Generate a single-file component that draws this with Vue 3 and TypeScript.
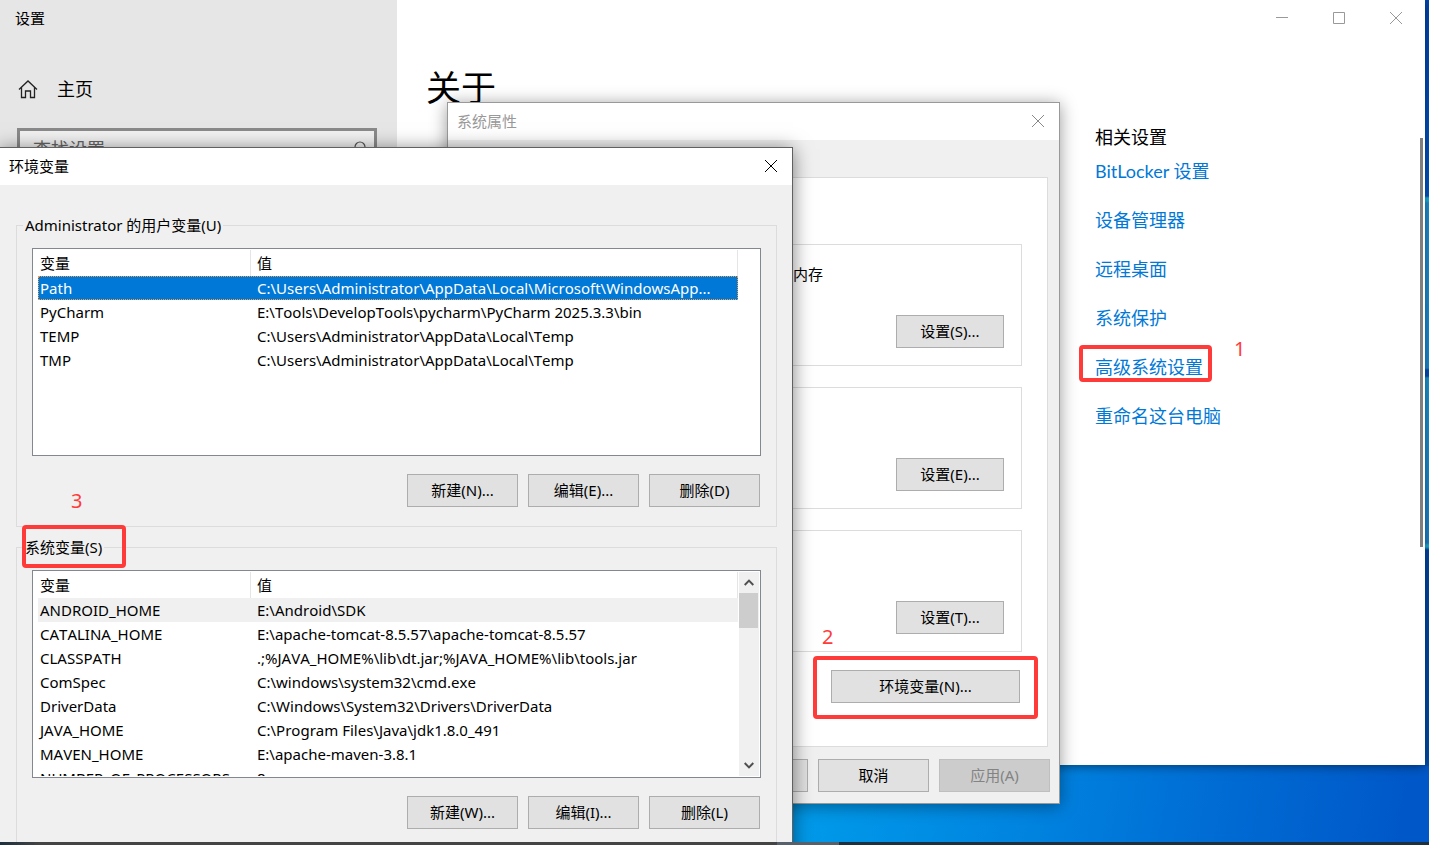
<script setup lang="ts">
interface Variable {
  name: string
  value: string
}

interface VariableGroup {
  id: string
  legend: string
  rows: Variable[]
  scroll: boolean
  current: string
  actions: string[]
}

const links: string[] = ['BitLocker 设置', '设备管理器', '远程桌面', '系统保护', '高级系统设置', '重命名这台电脑']

const sections = [
  { text: '虚拟内存', action: '设置(S)...' },
  { text: '', action: '设置(E)...' },
  { text: '', action: '设置(T)...' },
]

const groups: VariableGroup[] = [
  {
    id: 'user',
    legend: 'Administrator 的用户变量(U)',
    scroll: false,
    current: 'selected',
    rows: [
      { name: 'Path', value: 'C:\\Users\\Administrator\\AppData\\Local\\Microsoft\\WindowsApp...' },
      { name: 'PyCharm', value: 'E:\\Tools\\DevelopTools\\pycharm\\PyCharm 2025.3.3\\bin' },
      { name: 'TEMP', value: 'C:\\Users\\Administrator\\AppData\\Local\\Temp' },
      { name: 'TMP', value: 'C:\\Users\\Administrator\\AppData\\Local\\Temp' },
    ],
    actions: ['新建(N)...', '编辑(E)...', '删除(D)'],
  },
  {
    id: 'system',
    legend: '系统变量(S)',
    scroll: true,
    current: 'inactive',
    rows: [
      { name: 'ANDROID_HOME', value: 'E:\\Android\\SDK' },
      { name: 'CATALINA_HOME', value: 'E:\\apache-tomcat-8.5.57\\apache-tomcat-8.5.57' },
      { name: 'CLASSPATH', value: '.;%JAVA_HOME%\\lib\\dt.jar;%JAVA_HOME%\\lib\\tools.jar' },
      { name: 'ComSpec', value: 'C:\\windows\\system32\\cmd.exe' },
      { name: 'DriverData', value: 'C:\\Windows\\System32\\Drivers\\DriverData' },
      { name: 'JAVA_HOME', value: 'C:\\Program Files\\Java\\jdk1.8.0_491' },
      { name: 'MAVEN_HOME', value: 'E:\\apache-maven-3.8.1' },
      { name: 'NUMBER_OF_PROCESSORS', value: '8' },
    ],
    actions: ['新建(W)...', '编辑(I)...', '删除(L)'],
  },
]
</script>

<template>
  <div class="desktop">
    <main class="settings">
      <aside class="sidebar">
        <div class="app-title">设置</div>
        <a class="home" href="#">
          <svg width="20" height="20" viewBox="0 0 20 20" fill="none" stroke="#222" stroke-width="1.3">
            <path d="M1 10.500 10 2 19 10.500M3.500 8.500v10h4V12h5v6.500h4v-10" />
          </svg>
          <span>主页</span>
        </a>
        <label class="search">
          <input type="text" placeholder="查找设置" aria-label="查找设置" />
          <svg width="16" height="16" viewBox="0 0 16 16" fill="none" stroke="#555" stroke-width="1.2">
            <circle cx="9" cy="6" r="5" />
            <path d="M5.5 9.5 1 14" />
          </svg>
        </label>
      </aside>
      <section class="content">
        <div class="caption">
          <button aria-label="最小化">
            <svg width="12" height="12" viewBox="0 0 12 12" stroke="#999"><path d="M0 5.5h12" /></svg>
          </button>
          <button aria-label="最大化">
            <svg width="12" height="12" viewBox="0 0 12 12" fill="none" stroke="#999"><path d="M.5.5h11v11H.5z" /></svg>
          </button>
          <button aria-label="关闭">
            <svg width="12" height="12" viewBox="0 0 12 12" stroke="#999"><path d="m0 0 12 12M12 0 0 12" /></svg>
          </button>
        </div>
        <div class="columns">
          <h1>关于</h1>
          <nav class="related">
            <h2>相关设置</h2>
            <a v-for="link in links" :key="link" href="#">{{ link }}</a>
          </nav>
          <div class="page-scroll"></div>
        </div>
      </section>
    </main>

    <section class="window properties">
      <header class="titlebar">
        <span>系统属性</span>
        <button class="close" aria-label="关闭">
          <svg width="12" height="12" viewBox="0 0 12 12" stroke="#888"><path d="m0 0 12 12M12 0 0 12" /></svg>
        </button>
      </header>
      <div class="tab-page">
        <div class="sections">
          <div v-for="section in sections" :key="section.action" class="section">
            <span>{{ section.text }}</span>
            <button class="btn">{{ section.action }}</button>
          </div>
        </div>
        <button class="btn env">环境变量(N)...</button>
      </div>
      <footer class="dialog-actions">
        <button class="btn" aria-label="确定"></button>
        <button class="btn">取消</button>
        <button class="btn" disabled>应用(A)</button>
      </footer>
    </section>

    <section class="window variables">
      <header class="titlebar">
        <span>环境变量</span>
        <button class="close" aria-label="关闭">
          <svg width="12" height="12" viewBox="0 0 12 12" stroke="#000"><path d="m0 0 12 12M12 0 0 12" /></svg>
        </button>
      </header>
      <div class="groups">
        <fieldset v-for="group in groups" :key="group.id">
          <legend>{{ group.legend }}</legend>
          <div class="list">
            <div class="viewport">
              <table>
                <thead>
                  <tr><th>变量</th><th>值</th></tr>
                </thead>
                <tbody>
                  <tr v-for="(row, i) in group.rows" :key="row.name" :class="i === 0 ? group.current : ''">
                    <td>{{ row.name }}</td>
                    <td>{{ row.value }}</td>
                  </tr>
                </tbody>
              </table>
            </div>
            <div class="gutter" :class="{ scrollbar: group.scroll }">
              <template v-if="group.scroll">
                <button aria-label="向上滚动">
                  <svg width="10" height="7" viewBox="0 0 10 7" fill="none" stroke="#505050" stroke-width="2"><path d="M.7 6 5 1.6 9.3 6" /></svg>
                </button>
                <div class="thumb"></div>
                <button aria-label="向下滚动">
                  <svg width="10" height="7" viewBox="0 0 10 7" fill="none" stroke="#505050" stroke-width="2"><path d="M.7 1 5 5.4 9.3 1" /></svg>
                </button>
              </template>
            </div>
          </div>
          <div class="group-actions">
            <button v-for="action in group.actions" :key="action" class="btn">{{ action }}</button>
          </div>
        </fieldset>
      </div>
    </section>

    <div class="mark mark-1"></div>
    <span class="step step-1">1</span>
    <div class="mark mark-2"></div>
    <span class="step step-2">2</span>
    <div class="mark mark-3"></div>
    <span class="step step-3">3</span>

    <div class="taskbar"></div>
  </div>
</template>

<style>
body {
  margin: 0;
}
</style>

<style scoped>
.desktop {
  position: relative;
  height: 100vh;
  overflow: hidden;
  font-family: "Noto Sans", "Noto Sans CJK SC", sans-serif;
  font-size: 15px;
  line-height: 20px;
  color: #000;
  background:
    linear-gradient(#0047b3 0, #0058cc 196px, #19b5e0 198px 201px, #1f93d8 203px, #1c8fd8 368px, #0050c0 370px 376px, #1c9ad8 378px, #1c86d0 543px, #19b5e0 545px 547px, #0047a8 550px, #0050b0) right top / 5px 766px no-repeat,
    linear-gradient(100deg, #00a0ec 56%, #0084e0 74%, #006cd4 86%, #0058c8 98%);
}
.desktop * {
  box-sizing: border-box;
}
button,
input {
  margin: 0;
  padding: 0;
  border: 0;
  background: none;
  color: inherit;
  font: inherit;
}
svg {
  display: block;
  flex: none;
}
a {
  color: inherit;
  text-decoration: none;
}

.settings {
  position: absolute;
  inset: 0 4px 80px 0;
  display: flex;
  background: #fff;
  box-shadow: 0 1px 10px rgba(0, 0, 0, 0.5);
}
.sidebar {
  flex: none;
  width: 397px;
  background: #e6e6e6;
}
.app-title {
  padding: 8px 15px;
}
.home {
  display: flex;
  align-items: center;
  gap: 19px;
  padding: 40px 18px 0;
  font-size: 18px;
  line-height: 26px;
}
.search {
  display: flex;
  align-items: center;
  width: 360px;
  height: 42px;
  margin: 26px 0 0 17px;
  padding: 0 7px 0 13px;
  border: 3px solid #8a8a8a;
  background: #f2f2f2;
}
.search input {
  flex: 1;
  font-size: 18px;
  outline: 0;
}
.search input::placeholder {
  color: #666;
  opacity: 1;
}
.content {
  flex: 1;
  display: flex;
  flex-direction: column;
}
.caption {
  display: flex;
  justify-content: flex-end;
  padding-right: 1px;
}
.caption button {
  display: flex;
  align-items: center;
  justify-content: center;
  width: 57px;
  height: 36px;
}
.columns {
  flex: 1;
  display: flex;
  padding: 28px 2px 0 29px;
}
h1 {
  flex: 1;
  margin: 0;
  font-size: 35px;
  font-weight: 400;
  line-height: 48px;
}
.related {
  width: 325px;
  padding-top: 61px;
  display: flex;
  flex-direction: column;
  align-items: flex-start;
  font-family: Lato, "Noto Sans CJK SC", sans-serif;
  font-size: 18px;
  line-height: 24px;
  color: #0078d7;
}
.related h2 {
  margin: 0 0 10px;
  color: #000;
  font-size: 18px;
  font-weight: 400;
}
.related a {
  margin-bottom: 25px;
}
.page-scroll {
  width: 3px;
  height: 409px;
  margin-top: 74px;
  background: #7f7f7f;
}

.window {
  position: absolute;
  display: flex;
  flex-direction: column;
  background: #f0f0f0;
}
.titlebar {
  display: flex;
  align-items: center;
  justify-content: space-between;
  flex: none;
  height: 37px;
  padding: 0 15px 1px 9px;
  background: #fff;
}
.btn {
  flex: none;
  width: 111px;
  height: 33px;
  padding-bottom: 2px;
  border: 1px solid #adadad;
  background: #e1e1e1;
}
.btn:disabled {
  border-color: #bfbfbf;
  background: #ccc;
  color: #838383;
}

.properties {
  left: 447px;
  top: 102px;
  width: 613px;
  border: 1px solid #999;
  box-shadow: 0 2px 16px rgba(0, 0, 0, 0.4);
}
.properties .titlebar {
  color: #999;
}
.tab-page {
  display: flex;
  flex-direction: column;
  gap: 18px;
  margin: 37px 11px 0;
  padding: 66px 25px 43px;
  border: 1px solid #dcdcdc;
  background: #fff;
}
.sections {
  display: flex;
  flex-direction: column;
  gap: 21px;
}
.section {
  display: flex;
  flex-direction: column;
  justify-content: space-between;
  height: 122px;
  padding: 19px 17px 17px 277px;
  border: 1px solid #dcdcdc;
}
.section .btn {
  width: 108px;
  align-self: flex-end;
}
.tab-page .env {
  width: 189px;
  align-self: flex-end;
  margin-right: 2px;
}
.dialog-actions {
  display: flex;
  justify-content: flex-end;
  gap: 10px;
  padding: 12px 9px 11px;
}

.variables {
  left: -1px;
  top: 147px;
  width: 794px;
  border: 1px solid #606060;
  box-shadow: 0 2px 18px rgba(0, 0, 0, 0.5);
}
.groups {
  display: flex;
  flex-direction: column;
  gap: 10px;
  padding: 30px 15px 60px 16px;
}
fieldset {
  min-width: 0;
  margin: 0;
  padding: 13px 15px 19px;
  border: 1px solid #dcdcdc;
}
legend {
  margin-left: -9px;
  padding: 0 2px;
}
.list {
  display: flex;
  height: 208px;
  padding: 1px 1px 1px 5px;
  border: 1px solid #828790;
  background: #fff;
}
.viewport {
  flex: 1;
  min-width: 0;
  overflow: hidden;
}
table {
  width: 100%;
  table-layout: fixed;
  border-spacing: 0;
  font-kerning: none;
}
th,
td {
  height: 24px;
  padding: 0 2px;
  font-weight: 400;
  text-align: left;
  white-space: nowrap;
}
th {
  height: 26px;
  border-right: 1px solid #e5e5e5;
}
th:first-child {
  width: 213px;
}
th:last-child,
td:last-child {
  padding-left: 6px;
}
.selected {
  background: #0078d7;
  color: #fff;
  outline: 1px dotted #ff9a3c;
  outline-offset: -1px;
}
.inactive {
  background: #f0f0f0;
}
.gutter {
  flex: none;
  width: 21px;
}
.scrollbar {
  display: flex;
  flex-direction: column;
  margin-left: 1px;
  width: 20px;
  background: #f0f0f0;
}
.scrollbar button {
  display: flex;
  align-items: center;
  justify-content: center;
  width: 19px;
  height: 21px;
}
.thumb {
  width: 19px;
  height: 35px;
  margin-bottom: auto;
  background: #cdcdcd;
}
.group-actions {
  display: flex;
  justify-content: flex-end;
  gap: 10px;
  padding: 18px 1px 0 0;
}

.mark {
  position: absolute;
  border: 4px solid #ff3b3a;
  border-radius: 4px;
}
.mark-1 {
  left: 1079px;
  top: 345px;
  width: 133px;
  height: 37px;
}
.mark-2 {
  left: 813px;
  top: 656px;
  width: 225px;
  height: 63px;
}
.mark-3 {
  left: 22px;
  top: 525px;
  width: 104px;
  height: 43px;
}
.step {
  position: absolute;
  color: #ff3b3a;
  font-size: 20px;
  line-height: 24px;
}
.step-1 {
  left: 1234px;
  top: 337px;
}
.step-2 {
  left: 822px;
  top: 625px;
}
.step-3 {
  left: 71px;
  top: 489px;
}
.taskbar {
  position: absolute;
  inset: auto 0 0;
  height: 3px;
  background: linear-gradient(90deg, #1d2f3f 0, #444 40px 777px, #56616b 777px 839px, #1d3040 839px);
}
</style>
